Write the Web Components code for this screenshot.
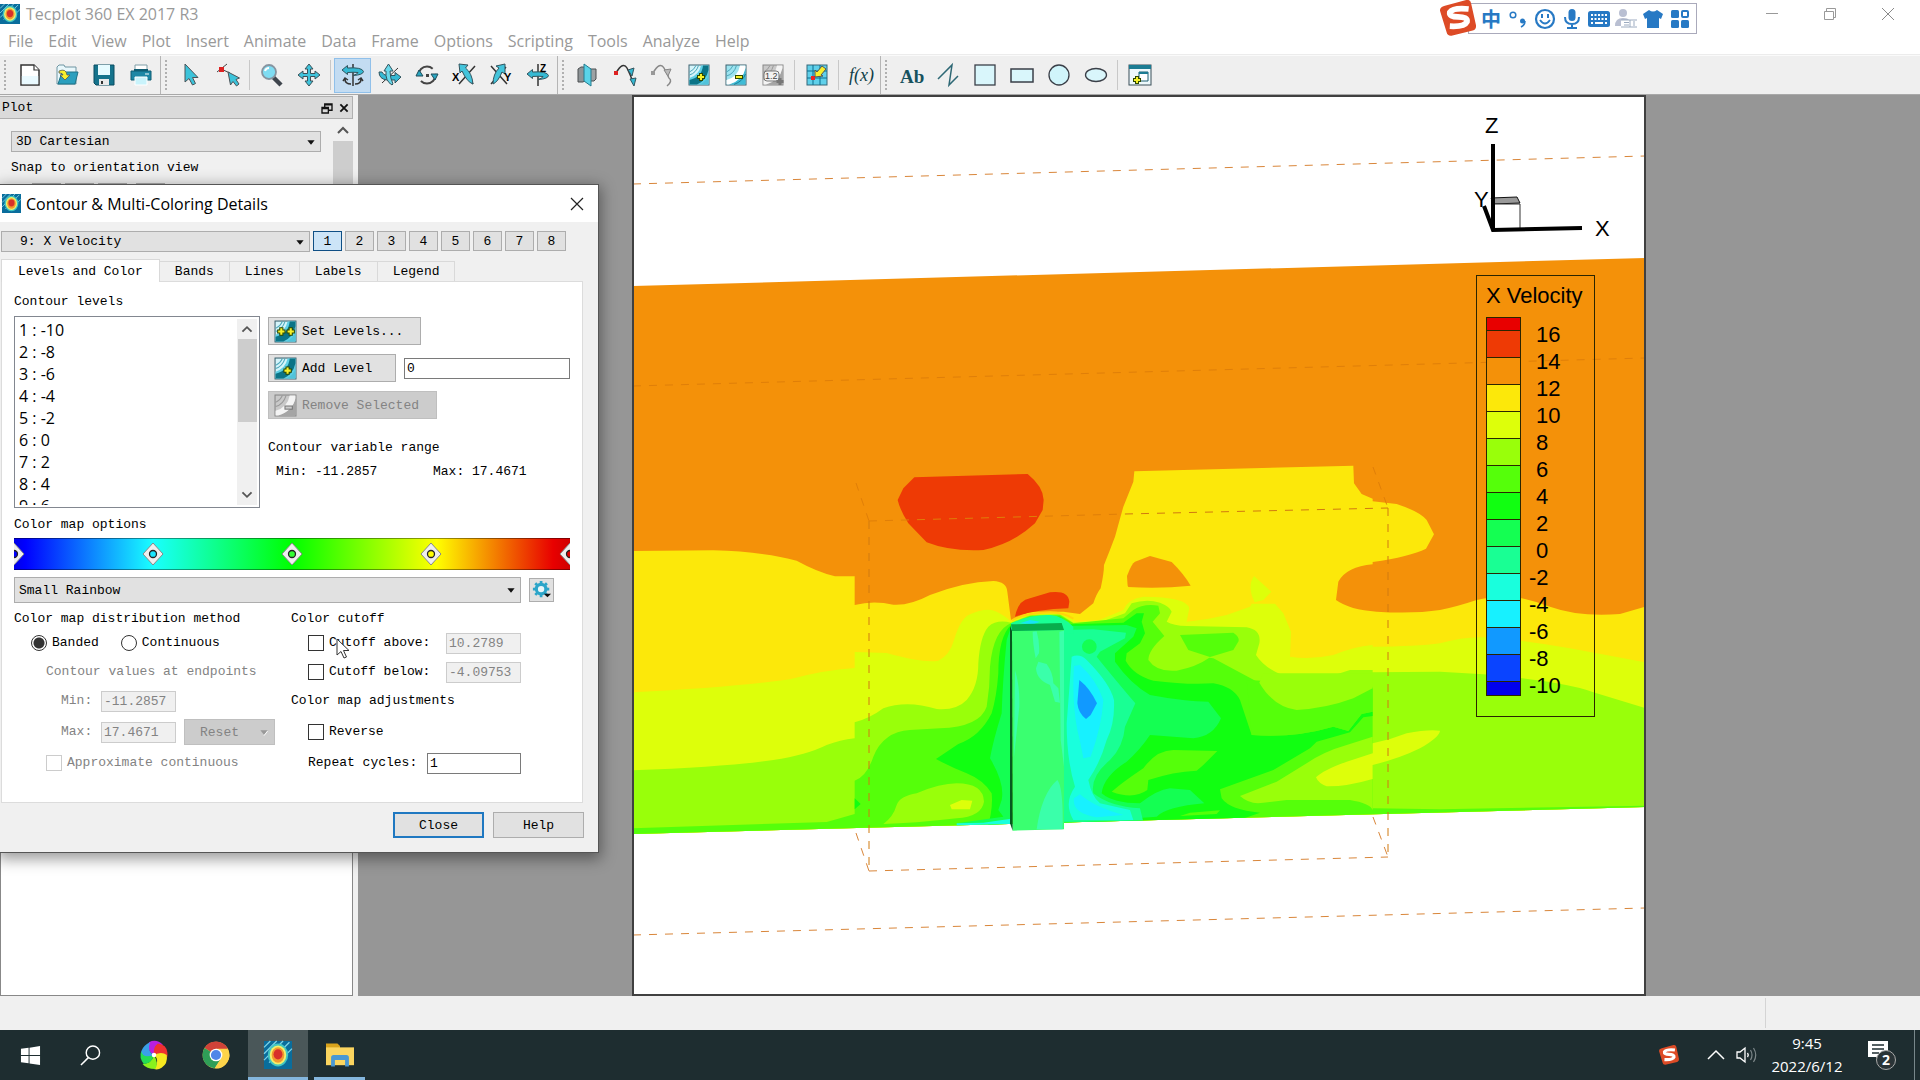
<!DOCTYPE html>
<html lang="en">
<head>
<meta charset="utf-8">
<title>Tecplot 360 EX 2017 R3</title>
<style>
  html, body { height: 100%; }
  body {
    margin: 0;
    font-family: "Open Sans", "Noto Sans CJK SC", sans-serif;
    font-size: 16px;
    overflow: hidden;
    --mono: 13px "Liberation Mono", "Noto Sans CJK SC", monospace;
  }
</style>
</head>
<body>
<tec-app></tec-app>

<script>
const contourBg = `<rect x="1" y="1" width="20" height="20" fill="#d5f4fa" stroke="#3d6370"/>
  <path d="M1.500 20.500V14Q11 11 13 1.500H20.500V20.500Z" fill="#5fd0e6"/>
  <path d="M1.500 20.500V16Q14 13 15 1.500H20.500V6Q18 17 9 20.500Z" fill="#0b7487"/>
  <path d="M12 20.500Q19 17 20.500 11V20.500Z" fill="#52c3da"/>
  <path d="M1.500 8Q6 6 8 1.500M1.500 11Q8 9 10.500 1.500" fill="none" stroke="#4ba8bb"/>`;
const minusBg = `<rect x="1" y="1" width="20" height="20" fill="#9de3ef" stroke="#3d6370"/>
  <path d="M4 20.500Q18 16 20.500 4V20.500Z" fill="#3fbcd6"/>
  <path d="M1.500 16Q13 13 15 1.500H20.500V4Q18 16 4 20.500H1.500Z" fill="#fff"/>
  <path d="M9 20.500Q18 17 20.500 10" fill="none" stroke="#1e7f96"/>
  <path d="M1.500 8Q6 6 8 1.500M1.500 12Q9 10 11.500 1.500" fill="none" stroke="#4ba8bb"/>`;
const grayBg = `<rect x="1" y="1" width="20" height="20" fill="#c9c9c9" stroke="#888"/>
  <path d="M4 20.500Q18 16 20.500 4V20.500Z" fill="#a5a5a5"/>
  <path d="M1.500 16Q13 13 15 1.500H20.500V4Q18 16 4 20.500H1.500Z" fill="#f4f4f4"/>
  <path d="M1.500 8Q6 6 8 1.500M1.500 12Q9 10 11.500 1.500" fill="none" stroke="#999"/>`;
const plus = (x, y) => `<path d="M${x} ${y - 4}v8M${x - 4} ${y}h8" stroke="#2f4a00" stroke-width="4"/><path d="M${x} ${y - 3}v6M${x - 3} ${y}h6" stroke="#f6f02a" stroke-width="2"/>`;
const sogou = `<path d="M3 3.500L16 0Q18.500-.5 19 2L22 15.500Q22.300 18 20 18.700L7 21.800Q4.500 22 4 19.500L0 6.500Q-.2 4.300 3 3.500Z" fill="#dd4b26"/>
  <path d="M17.500 5.500Q8 4.500 6 7.500Q5.500 10.300 11 10.300Q17 10.300 16.500 13.300Q15 16.500 6 16" fill="none" stroke="#fff" stroke-width="3.500"/>`;
const sweep = `<path d="M0 6L5.500 1.500V4Q20 3 21.500 7.500Q21 11 11 11.500Q16 10 16 8.500Q12 8 5.500 8.500V10.500Z" fill="#35b9d3" stroke="#32545e"/>`;

// every glyph is drawn on a 22x22 grid
const icons = {
  app: `<rect width="22" height="22" fill="#0a6d9c"/>
    <path d="M0 5L5 0M0 10L10 0M0 15L15 0M4 17L20 1M9 19L22 6" stroke="#7fd3e6" stroke-width="1"/>
    <ellipse cx="11" cy="11" rx="8" ry="9" fill="#43c7c1"/><ellipse cx="11" cy="11" rx="6.500" ry="7.500" fill="#f5ef6a"/>
    <ellipse cx="11" cy="11" rx="5" ry="6" fill="#f29a2e"/><ellipse cx="11" cy="10.500" rx="3.500" ry="4" fill="#d8302a"/>`,
  newFile: `<path d="M2 1H15L20 6V21H2Z" fill="#fff" stroke="#333" stroke-width="1.500"/><path d="M2.800 12H19.200V20.200H2.800Z" fill="#eafaff"/><path d="M15 1V6H20" fill="#fff" stroke="#333" stroke-width="1.200"/>`,
  open: `<path d="M1 20V3L3 1H8L9 3H20V20Z" fill="#e8f7fb" stroke="#6e95a2"/><path d="M2 20L6 8H22L19 20Z" fill="#2b9fbe" stroke="#1f7387"/>
    <path d="M3 7Q10 4 11 11H14L9 16L4 11H7Q7 9 3 9Z" fill="#f7ef2b" stroke="#555" stroke-width=".8"/>`,
  save: `<path d="M1 1H21V21H3L1 19Z" fill="#15738c" stroke="#0a4d60"/><path d="M5 1H17V11H5Z" fill="#e6fbff"/><path d="M6 15H16V21H6Z" fill="#e9e9e9"/><path d="M8 17h2v3H8Z" fill="#333"/>`,
  print: `<path d="M5 1H17V8H5Z" fill="#fff" stroke="#7f9da6"/><path d="M1 7H21V16H1Z" fill="#1d87a5" stroke="#0f5d73"/><path d="M4 6H18" stroke="#0f5d73" stroke-width="2"/><path d="M5 13H17V21H5Z" fill="#c9f3fb" stroke="#fff"/><path d="M15 10h4" stroke="#fff"/>`,
  select: `<path d="M5 0V18L9 14.500L12.500 21L15.500 19.500L12.500 13.500H18Z" fill="#3cc3da" stroke="#4b5459"/>`,
  adjust: `<path d="M0 8L10 0M4 5L13 9" fill="none" stroke="#444"/><rect x="2" y="3" width="5" height="5" fill="#d22"/><path d="M11 8L13.500 21L16 17.500L19.500 22L22 20L19 15.500L22.500 14Z" fill="#3cc3da" stroke="#4b5459"/>`,
  zoom: `<path d="M12 13L20 21" stroke="#3f454d" stroke-width="4.500"/><circle cx="8" cy="8" r="7" fill="#7fdcf2" stroke="#8794a0" stroke-width="1.800"/><path d="M4 7Q5 4 8 4" stroke="#fff" stroke-width="2" fill="none"/>`,
  move: `<path d="M11 0L15 5H12.500V9.500H17V7L22 11L17 15V12.500H12.500V17H15L11 22L7 17H9.500V12.500H5V15L0 11L5 7V9.500H9.500V5H7Z" fill="#3fc4dc" stroke="#3c5158"/>`,
  rotA: `<path d="M11 0V22" stroke="#333" stroke-width="1.500"/>${sweep}<path d="M9 20Q3 20 3 15M1 17l2-3 3 2M13 20Q19 20 19 15M16 16l3-2 2 3" fill="none" stroke="#333" stroke-width="1.500"/>`,
  rotB: `<path d="M3 19L19 4" stroke="#333"/><path d="M0 8Q0 15 8 16H16V19L22 13L16 8.500V11.500H8Q4 11 3 8Z" fill="#35b9d3" stroke="#32545e"/><path d="M13 21Q6 17 7 7H5L9.500 0L14 7H11Q11 14 14 20Z" fill="#69d8ea" stroke="#32545e"/>`,
  rotC: `<circle cx="11" cy="11" r="8.500" fill="none" stroke="#444" stroke-width="2" stroke-dasharray="20 6"/><path d="M0 12L3 6L7 12ZM15 10L19 16L22 10Z" fill="#2ba7c2" stroke="#1f4b58"/><path d="M10 10h3v3h-3Z" fill="#444"/>`,
  rotX: `<path d="M6 20L22 2M9 5L20 20" stroke="#333" stroke-width="1.500"/><path d="M6 0L15 1L12.500 4Q19 9 20 20Q14 18 9 7L7 9Z" fill="#43c4db" stroke="#32545e"/><text x="-1" y="17" font-family="Liberation Sans" font-size="11" font-weight="bold">X</text>`,
  rotY: `<path d="M1 20L16 3M1 2L17 20" stroke="#333" stroke-width="1.500"/><path d="M15 0L6 2L9 4Q3 10 3 20Q8 18 12 8L15 10Z" fill="#43c4db" stroke="#32545e"/><text x="14" y="17" font-family="Liberation Sans" font-size="11" font-weight="bold">Y</text>`,
  rotZ: `<path d="M11 0V22" stroke="#333" stroke-width="1.500"/><g transform="translate(0 4)">${sweep}</g><text x="13" y="8" font-family="Liberation Sans" font-size="10" font-weight="bold">Z</text>`,
  slice: `<path d="M1 5L4 3H9V16L6 18H1Z" fill="#8d9396" stroke="#4a4f51"/><path d="M12 5H19V15L17 17H12Z" fill="#9da2a4" stroke="#4a4f51"/><path d="M7 0L14 5V22L7 17Z" fill="#5ad3e8" stroke="#247b8e"/>`,
  stream: `<path d="M2 9Q9-3 13 4Q16 10 19 18" fill="none" stroke="#333" stroke-width="1.500"/><rect y="7" width="4" height="4" fill="#d22"/><path d="M14 6L20 4L18 12ZM16 15L22 14L20 22Z" fill="#35b9d3" stroke="#32545e"/>`,
  streamOff: `<path d="M2 9Q9-3 13 4Q16 10 18 14Q22 17 16 22" fill="none" stroke="#888" stroke-width="1.500"/><rect y="7" width="4" height="4" fill="#999"/><path d="M13 6L20 5L17 12Z" fill="#bbb" stroke="#888"/>`,
  contourAdd: contourBg + plus(13, 13),
  contourAdd2: contourBg + plus(7, 11) + plus(16, 11),
  contourDel: minusBg + `<path d="M10 13h8" stroke="#2f4a00" stroke-width="4"/><path d="M11 13h6" stroke="#f6f02a" stroke-width="2"/>`,
  contourDelOff: grayBg + `<path d="M10 13h8" stroke="#777" stroke-width="4"/><path d="M11 13h6" stroke="#ccc" stroke-width="2"/>`,
  contourLabel: grayBg + `<rect x="2" y="7" width="15" height="10" rx="3" fill="#f2f2f2" stroke="#777"/><text x="3" y="15" font-family="Liberation Sans" font-size="9" fill="#444">1.2</text><path d="M18 14v7M14.500 17.500h7" stroke="#777" stroke-width="3"/>`,
  probe: `<rect x="1" y="1" width="20" height="20" fill="#5fd0ea" stroke="#37687a"/><path d="M7 1V21M14 1V21M1 7H21M1 14H21" stroke="#0d6f90" fill="none"/><rect x="5" y="12" width="4" height="4" fill="#e22"/><path d="M9 13V6L11 8L16 2L20 5L15 11L17 12Z" fill="#f7f02b" stroke="#555"/>`,
  fx: `<text x="-1" y="17" font-family="Liberation Serif" font-style="italic" font-size="18" fill="#0f3e48">f(x)</text>`,
  ab: `<text x="0" y="19" font-family="Liberation Serif" font-weight="bold" font-size="19" fill="#17525e">Ab</text>`,
  line: `<path d="M1 15L15 1L12 21L21 12" fill="none" stroke="#2e6875" stroke-width="1.500"/>`,
  square: `<rect x="1" y="1" width="20" height="20" fill="#d9f6fb" stroke="#3a3f48" stroke-width="1.300"/>`,
  rect: `<rect x="0" y="5" width="22" height="13" fill="#d9f6fb" stroke="#3a3f48" stroke-width="1.500"/>`,
  circle: `<circle cx="11" cy="11" r="10" fill="#d0f5fb" stroke="#3a3f48" stroke-width="1.300"/>`,
  ellipse: `<ellipse cx="11" cy="11" rx="10.500" ry="6.500" fill="#d9f6fb" stroke="#3a3f48" stroke-width="1.300"/>`,
  frame: `<rect x="0" y="1" width="22" height="20" fill="#eef9fc" stroke="#3a4f58"/><path d="M0 1h22v4H0Z" fill="#1c7c93"/><path d="M10 8h9v9h-9Z" fill="#fff" stroke="#1c5f70"/><path d="M10 8h9v2h-9Z" fill="#1c7c93"/>` + plus(8, 16),
  gear: `<g fill="#2ca5c9"><circle cx="10" cy="10" r="7"/><g stroke="#2ca5c9" stroke-width="3"><path d="M10 1V19M1 10H19M3.600 3.600L16.400 16.400M16.400 3.600L3.600 16.400"/></g></g><circle cx="10" cy="10" r="3.500" fill="#e8f6fa"/><path d="M13 15h8l-4 4Z" fill="#111"/>`,
  sogou,
  windows: `<path d="M1 4L9 3V10.500H1ZM10 2.800L21 1V10.500H10ZM1 11.500H9V19L1 18ZM10 11.500H21V21L10 19.300Z" fill="#fff"/>`,
  search: `<circle cx="13.500" cy="8" r="7" fill="none" stroke="#fff" stroke-width="1.500"/><path d="M9 13L1 21" stroke="#fff" stroke-width="1.600"/>`,
  pinwheel: `<path d="M11 11Q5 8 7 1Q13-2 18 3Q12 4 11 11Z" fill="#b81fe0"/><path d="M11 11Q10 5 14 2Q21 3 21.500 9Q22 13 20 15Q18 8 11 11Z" fill="#f03030"/>
    <path d="M11 11Q17 8 21 11Q22 18 17 21Q14 23 11 22Q16 15 11 11Z" fill="#f6e81f"/><path d="M11 11Q15 18 12 22Q5 22 2 18Q9 18 11 11Z" fill="#8af01d"/>
    <path d="M11 11Q9 18 3 18Q-1 13 1 8Q5 13 11 11Z" fill="#24dc55"/><path d="M11 11Q2 14 1 8Q3 3 8 1Q5 8 11 11Z" fill="#3aa0e8"/><circle cx="11" cy="11" r="1.800" fill="#fff"/>`,
  chrome: `<circle cx="11" cy="11" r="10.500" fill="#fdd44a"/><path d="M11 11L2 5.500A10.500 10.500 0 0 1 20.500 6.500Z" fill="#d04238"/><path d="M11 11L2 5.500A10.500 10.500 0 0 0 10 21.500L15.500 13Z" fill="#2f9e57"/><path d="M11 6H20.200A10.500 10.500 0 0 1 10 21.500L15.500 13Z" fill="#fdd44a"/><circle cx="11" cy="11" r="5" fill="#fff"/><circle cx="11" cy="11" r="4" fill="#4f86e8"/>`,
  folder: `<path d="M0 2H9L11 4V8H0Z" fill="#d9a31c"/><path d="M0 5H22V19H0Z" fill="#fbd55f"/><path d="M4 20V13Q4 11 6 11H16Q18 11 18 13V20H15V15H7V20Z" fill="#4a98d3"/>`,
  caret: `<path d="M3 15L11 7L19 15" fill="none" stroke="#fff" stroke-width="1.500"/>`,
  speaker: `<path d="M2 8H5L10 4V18L5 14H2Z" fill="none" stroke="#fff" stroke-width="1.300"/><path d="M12.500 9Q14 11 12.500 13" fill="none" stroke="#fff" stroke-width="1.300"/><path d="M15.500 6Q18.500 11 15.500 16M18.500 4Q23 11 18.500 18" fill="none" stroke="#7d8789" stroke-width="1.200"/>`,
  note: `<path d="M1 1H21V17H15L12 20L9 17H1Z" fill="#fff"/><path d="M5 5H17M5 9H17M5 13H12" stroke="#1e2d30" stroke-width="1.300"/>`,
  punct: `<circle cx="6" cy="7" r="2.800" fill="none" stroke="#2779c4" stroke-width="1.500"/><circle cx="15.500" cy="13" r="2.500" fill="#2779c4"/><path d="M18 13Q18 17 14 19" fill="none" stroke="#2779c4" stroke-width="1.600"/>`,
  smile: `<circle cx="11" cy="11" r="9" fill="none" stroke="#2779c4" stroke-width="2.200"/><path d="M8 6v4M14 6v4" stroke="#2779c4" stroke-width="2"/><path d="M6 12Q11 19 16 12" fill="none" stroke="#2779c4" stroke-width="1.800"/>`,
  mic: `<rect x="7.500" y="1" width="7" height="12" rx="3.500" fill="#2779c4"/><path d="M4 9Q4 16 11 16Q18 16 18 9M11 16V20M6 20H16" fill="none" stroke="#2779c4" stroke-width="2"/>`,
  keyboard: `<rect x="0" y="3" width="22" height="16" rx="2.500" fill="#2779c4"/><path d="M3 7H19M3 11H19" stroke="#fff" stroke-width="2" stroke-dasharray="2 1.500"/><path d="M3 15H5M7 15H15M17 15H19" stroke="#fff" stroke-width="2"/>`,
  person: `<circle cx="8" cy="5" r="4" fill="#b9bfd2"/><path d="M0 18Q0 10 8 10Q13 10 14 12H6V18Z" fill="#b9bfd2"/><path d="M6 12H22M6 19H22M9 14.500H14M9 17H14M15 12V19M19 13V18" stroke="#9cabc0" fill="none"/>`,
  shirt: `<path d="M7 2Q11 5 15 2L21 6L19 11L17 10V20H5V10L3 11L1 6Z" fill="#2779c4"/>`,
  grid: `<rect x="2" y="2" width="8" height="8" rx="1.500" fill="#2779c4"/><rect x="13" y="3" width="6" height="6" rx="1" fill="#fff" stroke="#2779c4" stroke-width="2"/><rect x="2" y="12" width="8" height="8" rx="1.500" fill="#2779c4"/><rect x="12" y="12" width="8" height="8" rx="1.500" fill="#2779c4"/>`,
  min: `<path d="M5 10.500H17" stroke="#999"/>`,
  restore: `<path d="M5.500 8.500h9v8h-9ZM7.500 8V5.500H16.500V14.500H15" fill="none" stroke="#999"/>`,
  close: `<path d="M5 5L17 17M17 5L5 17" stroke="#8a8a8a" fill="none"/>`,
  closeDark: `<path d="M5 5L17 17M17 5L5 17" stroke="#222" stroke-width="1.200" fill="none"/>`,
  dockFloat: `<path d="M5.500 10.500h7v6h-7ZM8.500 10V6.500H16.500V13.500H13M5.500 11.500h7M8.500 7.500h8" fill="none" stroke="#111" stroke-width="1.500"/>`,
  dockClose: `<path d="M7 7L15 15M15 7L7 15" stroke="#111" stroke-width="2" fill="none"/>`,
  up: `<path d="M6 14L11 9L16 14" fill="none" stroke="#555" stroke-width="2"/>`,
  down: `<path d="M6 8L11 13L16 8" fill="none" stroke="#555" stroke-width="2"/>`,
  drop: `<path d="M7 9h8l-4 5Z" fill="#111"/>`,
  dropOff: `<path d="M7 9h8l-4 5Z" fill="#999"/><path d="M15 10l-4 5" stroke="#fff"/>`,
  cursor: `<path d="M5 1V17L9 13.500L12 20L14.500 19L11.500 12.500H17Z" fill="#fff" stroke="#333"/>`
};

class BaseElement extends HTMLElement {
  connectedCallback() {
    this.attachShadow({ mode: "open" }).innerHTML = this.render();
  }
}

class TecIcon extends BaseElement {
  render() {
    const size = this.getAttribute("size") || 22;
    return `<style>
      :host { display: inline-flex; flex: none; }
      svg { display: block; overflow: visible; }
    </style>
    <svg width="${size}" height="${size}" viewBox="0 0 22 22" aria-hidden="true">${icons[this.getAttribute("name")]}</svg>`;
  }
}
customElements.define("tec-icon", TecIcon);

class TecSelect extends BaseElement {
  render() {
    return `<style>
      :host { display: grid; align-items: center; height: 21px; }
      select {
        grid-area: 1 / 1; width: 100%; height: 100%; box-sizing: border-box; margin: 0;
        appearance: none; border: 1px solid #adadad; border-radius: 0; background: #e1e1e1;
        padding: 0 20px 0 var(--inset, 4px); font: var(--mono); color: #000;
      }
      tec-icon { grid-area: 1 / 1; justify-self: end; pointer-events: none; }
    </style>
    <select aria-label="${this.getAttribute("label")}"><option>${this.getAttribute("value")}</option></select>
    <tec-icon name="drop" size="20"></tec-icon>`;
  }
}
customElements.define("tec-select", TecSelect);

class TitleBar extends BaseElement {
  render() {
    return `<style>
      :host { display: flex; align-items: center; height: 28px; padding-right: 4px; background: #fff; color: #999; }
      h1 { font: inherit; margin: 0 auto 0 6px; }
      tec-icon:first-child { margin-left: 2px; }
      button { width: 58px; height: 28px; padding: 0; border: 0; background: none; display: grid; place-items: center; }
      button tec-icon { margin: 0; }
    </style>
    <tec-icon name="app" size="20"></tec-icon>
    <h1>Tecplot 360 EX 2017 R3</h1>
    <button aria-label="Minimize"><tec-icon name="min"></tec-icon></button>
    <button aria-label="Restore"><tec-icon name="restore"></tec-icon></button>
    <button aria-label="Close"><tec-icon name="close"></tec-icon></button>`;
  }
}
customElements.define("title-bar", TitleBar);

class MenuBar extends BaseElement {
  items = ["File", "Edit", "View", "Plot", "Insert", "Animate", "Data", "Frame", "Options", "Scripting", "Tools", "Analyze", "Help"];

  render() {
    return `<style>
      :host { display: flex; height: 26px; background: #fff; border-bottom: 1px solid #ececec; }
      button { border: 0; background: none; padding: 0 7px 0 8px; font: inherit; color: #999; }
    </style>
    ${this.items.map((i) => `<button>${i}</button>`).join("")}`;
  }
}
customElements.define("menu-bar", MenuBar);

class ToolBar extends BaseElement {
  groups = [
    ["newFile", "open", "save", "print"],
    ["select", "adjust", "|", "zoom", "move", "|", "rotA", "rotB", "rotC", "rotX", "rotY", "rotZ"],
    ["slice", "stream", "streamOff", "contourAdd", "contourDel", "contourLabel", "|", "probe", "|", "fx"],
    ["ab", "line", "square", "rect", "circle", "ellipse", "|", "frame"],
  ];

  button(name) {
    if (name === "|") return `<span class="sep"></span>`;
    return `<button class="${name === "rotA" ? "on" : ""}" aria-label="${name}"><tec-icon name="${name}"></tec-icon></button>`;
  }

  render() {
    return `<style>
      :host { display: flex; height: 38px; background: #efefef; border-top: 1px solid #fafafa; border-bottom: 1px solid #a8a8a8; }
      .group { display: flex; align-items: center; padding-right: 1px; border-right: 1px solid #b5b5b5; }
      .group:last-child { border: 0; }
      .handle { width: 2px; height: 30px; margin: 0 5px 0 4px; background: repeating-linear-gradient(#b0b0b0 0 2px, transparent 2px 4px); }
      button { width: 37px; height: 35px; padding: 0; border: 1px solid transparent; background: none; display: grid; place-items: center; }
      .on { background: #c3dcf2; border-color: #90c0ea; }
      .sep { width: 1px; height: 30px; margin: 0 3px; background: #c8c8c8; }
    </style>
    ${this.groups.map((g) => `<div class="group"><span class="handle"></span>${g.map(this.button).join("")}</div>`).join("")}`;
  }
}
customElements.define("tool-bar", ToolBar);

class PlotSidebar extends BaseElement {
  render() {
    return `<style>
      :host { display: flex; flex-direction: column; width: 353px; padding: 1px 5px 0 0; background: #f0f0f0; font: var(--mono); }
      header { display: flex; align-items: center; height: 21px; background: #dadada; border: 1px solid #b0b0b0; border-left: 0; }
      h2 { font: inherit; margin: 0 auto 0 2px; }
      header button { border: 0; padding: 0; background: none; display: flex; width: 17px; justify-content: center; }
      .scroll { display: flex; height: 420px; }
      .content { flex: 1; padding: 12px 12px 0 11px; }
      p { margin: 6px 0 5px; line-height: 20px; }
      .views { display: flex; gap: 4px; padding-left: 21px; }
      .views button { width: 29px; height: 24px; border: 1px solid #adadad; background: #e1e1e1; }
      .views button:last-child { margin-left: 5px; }
      .bar { width: 20px; display: flex; flex-direction: column; align-items: center; }
      .thumb { width: 20px; height: 200px; background: #cdcdcd; }
      .list { flex: 1; background: #fff; border: 1px solid #888; }
    </style>
    <header><h2>Plot</h2>
      <button aria-label="Float"><tec-icon name="dockFloat" size="20"></tec-icon></button>
      <button aria-label="Close"><tec-icon name="dockClose" size="20"></tec-icon></button>
    </header>
    <div class="scroll">
      <div class="content">
        <tec-select label="Plot type" value="3D Cartesian"></tec-select>
        <p>Snap to orientation view</p>
        <div class="views"><button aria-label="XY"></button><button aria-label="YZ"></button><button aria-label="XZ"></button><button aria-label="Iso"></button></div>
      </div>
      <div class="bar"><tec-icon name="up"></tec-icon><span class="thumb"></span></div>
    </div>
    <div class="list"></div>`;
  }
}
customElements.define("plot-sidebar", PlotSidebar);

class FlowPlot extends BaseElement {
  colors = ["#e80000", "#ee3a05", "#f49109", "#fce80a", "#ddff0a", "#99ff0a", "#55ff0a", "#11ff11", "#14ff52", "#19ff94", "#19ffdd", "#17f1ff", "#1199ff", "#0a44ff", "#0000ee"];

  legend() {
    const cells = this.colors.map((c, i) => {
      const y = i ? 330 + (i - 1) * 27 : 317;
      const h = i === 0 ? 13 : i === 14 ? 14 : 27;
      return `<rect x="1486" y="${y}" width="34" height="${h}" fill="${c}"/>`;
    });
    const labels = [];
    for (let v = 16, y = 342; v >= -10; v -= 2, y += 27) {
      labels.push(`<text x="${v < 0 ? 1529 : 1536}" y="${y}">${v}</text>`);
    }
    return `<g stroke="#2b2500" shape-rendering="crispEdges"><rect x="1476" y="275" width="118" height="441" fill="none"/>${cells.join("")}</g>
      <text x="1486" y="303">X Velocity</text>${labels.join("")}`;
  }

  render() {
    return `<style>
      :host { display: block; height: 100%; aspect-ratio: 1014 / 901; background: #fff; }
      svg { display: block; width: 100%; height: 100%; }
      text { font: 22px "Liberation Sans", Arial, sans-serif; }
    </style>
    <svg viewBox="632 95 1014 901" role="img" aria-label="X Velocity contour">
      <clipPath id="slab"><path d="M633 286L1645 258V807L633 834Z"/></clipPath>
      <g clip-path="url(#slab)">
      <rect x="633" y="250" width="1012" height="600" fill="#f49109"/>
      <g transform="translate(630 440) scale(.33333)">
        <path fill="#fce80a" d="M9 333L250 331Q400 335 500 362Q560 395 615 409H674V495Q730 480 790 494Q840 497 900 465Q1000 426 1090 423Q1130 425 1132 455L1143 540L1200 515L1300 515L1350 522L1390 490Q1400 460 1412 445Q1422 400 1422 375Q1440 330 1455 290L1480 200L1510 125L1513 94L2170 77L2172 130L2195 162L2228 176V184L2300 192Q2370 215 2390 240L2412 283L2388 326Q2340 350 2228 366V373Q2150 380 2125 425L2118 480Q2160 510 2240 515Q2350 522 2430 510Q2480 500 2540 480Q2600 465 2675 475Q2720 485 2760 500Q2850 532 2970 522L3045 500V1400H9Z"/>
        <path fill="#f49109" d="M1493 437L1491 408Q1505 370 1515 365L1560 348L1625 366Q1660 400 1682 437Q1590 447 1495 441Z"/>
        <path fill="#ddff0a" d="M9 757Q300 742 480 718Q580 690 674 684V636L770 639Q880 670 925 662Q960 645 972 600Q990 540 1015 525Q1070 500 1100 515Q1130 530 1143 545L1200 522L1290 520L1340 545L1410 539L1480 510Q1495 475 1540 470Q1670 470 1678 505L1670 545Q1730 540 1790 525L1860 500L1865 491H1935L1960 520L1983 575L1980 650Q2040 660 2110 645Q2170 620 2228 615V620Q2360 620 2430 610Q2500 590 2560 592Q2680 600 2820 625L3045 667V1400H9Z"/>
        <path fill="#ddff0a" d="M1872 408L1924 455L1900 480L1874 487Q1850 440 1872 408Z"/>
        <path fill="#99ff0a" d="M9 991Q300 980 430 960Q530 945 590 915Q630 900 674 895V847Q720 835 760 805Q830 780 920 807Q980 812 1010 780Q1045 740 1045 670Q1050 590 1075 560Q1100 538 1143 548L1200 525L1290 523L1330 548L1410 547L1485 520L1505 490Q1550 475 1590 488Q1620 500 1625 515L1610 545Q1630 557 1670 558L1850 562Q1895 570 1888 610L1878 645Q1910 695 1990 715Q2080 720 2160 690H2228V697L2430 695L2560 703Q2700 715 2780 730Q2850 742 2890 757L3045 804V1400H9Z"/>
        <path fill="#55ff0a" d="M9 1165L590 1146Q630 1135 674 1122V1022Q710 1010 730 950Q760 875 840 870L930 865Q1050 860 1070 800Q1080 740 1080 680Q1090 570 1143 550L1200 528L1290 526L1330 550L1480 535L1510 510Q1540 490 1585 497L1590 520L1568 545L1603 588Q1555 630 1555 660Q1580 697 1640 692Q1700 680 1738 653L1750 655L1890 730Q1930 800 2000 810Q2090 805 2170 775L2228 745V1105L2430 1108L3045 1097V1400H9Z"/>
        <path fill="#55ff0a" d="M1650 585L1810 578Q1828 590 1826 603L1810 630L1740 651L1675 630Z"/>
        <path fill="#99ff0a" d="M2228 890L2150 915Q2080 935 2030 970L1940 1025L1830 1068Q1860 1095 1900 1088L1970 1080H2160Q2220 1090 2228 1110ZM760 1152Q790 1130 800 1095Q810 1068 860 1060Q930 1030 980 1030Q1060 1030 1062 1085Q1055 1130 980 1135Q850 1150 760 1152Z"/>
        <path fill="#ddff0a" d="M2058 1012Q2080 990 2150 965L2228 940V910Q2280 900 2330 880Q2390 868 2430 872Q2430 890 2370 925Q2310 955 2228 975V1017Q2150 1040 2090 1039Q2065 1030 2058 1012ZM960 1095L995 1080L1027 1082L1020 1108H965Z"/>
        <path fill="#11ff11" d="M918 957L985 912Q1050 890 1085 820Q1100 770 1105 700Q1105 590 1143 555V1170H1070Q1090 1110 1085 1060Q1060 1020 1010 1000Q960 980 918 957ZM674 1075L692 1092L674 1108Z"/>
        <path fill="#14ff52" d="M1143 560L1130 600Q1118 720 1115 820Q1090 900 1080 955Q1125 1030 1115 1080L1105 1110L1120 1130L980 1150H1143Z"/>
        <path fill="#19ffdd" d="M980 1150L1060 1148L1143 1136V1160H980Z"/>
        <path fill="#11ff11" d="M1143 552L1200 532L1290 530L1320 553L1480 548L1520 520H1542L1535 545L1545 580L1530 610L1490 640L1487 662Q1510 705 1570 722Q1670 735 1750 730Q1810 740 1830 780L1865 885Q1990 895 2110 860L2155 873L2195 822L2228 815V828L2200 832L2160 877L2060 905L2040 925L1930 990L1770 1048L1775 1075Q1800 1110 1890 1118L1800 1150H1300Z"/>
        <path fill="#55ff0a" d="M1865 885Q1990 895 2110 860L2155 873L2195 822L2228 815V740L1850 720Z"/>
        <path fill="#99ff0a" d="M1888 728Q1930 800 2000 810Q2090 805 2170 775L2228 745V700H1900Z"/>
        <path fill="#55ff0a" d="M1445 1055Q1480 1025 1540 985Q1580 930 1630 930L1762 933L1720 975L1700 992Q1630 995 1555 1020L1552 1050Q1510 1080 1445 1055ZM1650 1128L1680 1118L1770 1111L1760 1122Z"/>
        <path fill="#14ff52" d="M1300 558L1490 555L1520 565L1510 590L1455 640V665Q1500 730 1560 765Q1670 785 1735 785L1773 835Q1750 890 1690 895L1560 885Q1530 930 1490 965Q1420 1010 1415 1060Q1450 1090 1530 1090Q1580 1050 1620 1045L1680 1050L1723 1090Q1610 1100 1580 1130L1300 1150Z"/>
        <path fill="#19ff94" d="M1300 570L1390 568L1488 578L1485 595L1410 635L1400 650Q1440 700 1516 790L1485 860Q1480 920 1440 960Q1380 1010 1390 1060Q1440 1100 1530 1105L1540 1145H1300Z"/>
        <circle cx="1378" cy="620" r="22" fill="#14ff52"/>
        <path fill="#19ffdd" d="M1325 650Q1350 640 1370 660Q1440 730 1452 780Q1455 850 1430 900Q1410 970 1375 1020Q1385 1070 1410 1090L1500 1110L1510 1140H1330Q1300 1090 1335 1040Q1310 960 1310 850Q1320 720 1325 650Z"/>
        <path fill="#17f1ff" d="M1332 678L1350 675Q1400 720 1420 780Q1415 860 1382 950L1360 955Q1350 900 1342 870Q1325 780 1332 678ZM1350 1063Q1390 1100 1480 1125L1400 1132Q1325 1120 1332 1075Z"/>
        <path fill="#1199ff" d="M1348 720Q1380 745 1401 790L1382 825L1368 837Q1345 820 1342 790Z"/>
        <path fill="#ee3a05" d="M803 180L820 145L853 112L1193 102Q1240 140 1241 180L1238 210L1215 250Q1150 310 1060 330Q960 335 890 307L835 250Q810 210 803 180ZM1155 530Q1165 480 1200 475L1260 457Q1315 450 1318 485L1315 505Q1220 508 1155 530Z"/>
        <path fill="none" stroke="#ffd50a" stroke-width="6" d="M1146 541Q1180 520 1260 517Q1300 518 1330 536"/>
        <path fill="#19ff94" d="M1143 550Q1200 523 1260 525Q1300 528 1330 560V580H1143Z"/>
        <path fill="#17e4f5" d="M1170 550L1200 540L1230 545L1210 553Z"/>
      </g>
      </g>
      <g transform="translate(1000 440) scale(.33333)">
        <path fill="#3aff70" d="M36 573L192 570V1168L38 1172Z"/>
        <path fill="#08ad4c" d="M33 553L185 549L192 570L36 573Z"/>
        <path fill="#05591f" d="M30 558L36 573L38 1172L30 1150Z"/>
        <path fill="#3affaa" d="M98 575L110 574Q120 610 117 640L107 655Q98 610 98 575ZM115 665L140 672Q160 700 160 730L175 745L180 788L165 785L150 735Q110 720 108 685ZM178 575L192 572V980L182 900ZM45 690Q60 740 58 800L42 950ZM110 1168Q125 1060 172 1020Q190 1040 188 1168Z"/>
      </g>
      <g fill="none" stroke="#d9863a" stroke-dasharray="8 8">
        <path d="M633 184L1645 156M633 935L1645 908M869 871L1388 857M856 833L869 871M1373 817L1388 857"/>
        <path stroke="#d17a10" d="M869 521V871M1388 508V857M1125 514L1388 508"/>
        <path stroke="#e07f08" d="M633 386L1645 358M869 521L1125 514M856 483L869 521M1373 467L1388 508"/>
      </g>
      <path d="M1491 198L1517 197L1520 203L1494 204Z" fill="#999" stroke="#111"/>
      <path d="M1494 204H1520V229H1494Z" fill="#fff" stroke="#333"/>
      <path d="M1484 206L1493 230L1582 228M1493 144V230" fill="none" stroke="#000" stroke-width="4"/>
      <text x="1485" y="133">Z</text><text x="1474" y="207">Y</text><text x="1595" y="236">X</text>
      ${this.legend()}
      <rect x="633" y="96" width="1012" height="899" fill="none" stroke="#404040" stroke-width="2"/>
    </svg>`;
  }
}
customElements.define("flow-plot", FlowPlot);

class LevelList extends BaseElement {
  render() {
    const items = [-10, -8, -6, -4, -2, 0, 2, 4, 6].map((v, i) => `<li>${i + 1} : ${v}</li>`).join("");
    return `<style>
      :host { display: flex; box-sizing: border-box; height: 192px; border: 1px solid #828790; background: #fff; padding: 2px; }
      ul { flex: 1; margin: 0; padding: 0 2px; list-style: none; overflow: hidden; font: 16px/22px "Open Sans", sans-serif; }
      .bar { width: 20px; display: flex; flex-direction: column; align-items: center; background: #f0f0f0; }
      .thumb { width: 19px; height: 83px; background: #cdcdcd; }
      .bar tec-icon:last-child { margin-top: auto; }
    </style>
    <ul>${items}</ul>
    <div class="bar"><tec-icon name="up" size="20"></tec-icon><span class="thumb"></span><tec-icon name="down" size="20"></tec-icon></div>`;
  }
}
customElements.define("level-list", LevelList);

class ColorMap extends BaseElement {
  render() {
    const stops = ["#00f", "#19e6ff", "#3f3", "#ff0", "#d00"];
    const marks = stops.map((c, i) => `<g transform="translate(${i * 139} 16)"><path d="M-10 0L0-11L10 0L0 11Z" fill="#eee" stroke="#888"/><circle r="3.500" fill="${c}" stroke="#222" stroke-width="1.300"/></g>`);
    return `<style>
      :host { display: block; background: linear-gradient(90deg, #0000e8, #00f 2%, #19ffff 25%, #0f0 50%, #ff0 76%, #e80000 97%, #d00000); box-shadow: inset 0 1px #0006, inset 0 -1px #0006; }
      svg { display: block; width: 100%; height: 32px; }
    </style>
    <svg viewBox="0 0 556 32" aria-hidden="true">${marks.join("")}</svg>`;
  }
}
customElements.define("color-map", ColorMap);

class ContourDialog extends BaseElement {
  render() {
    const pages = [1, 2, 3, 4, 5, 6, 7, 8].map((n) => `<button class="${n === 1 ? "on" : ""}">${n}</button>`).join("");
    return `<style>
      :host { display: block; font: var(--mono); background: #f0f0f0; border: 1px solid #555; border-left: 0; box-shadow: 0 4px 14px 2px #0006; }
      * { box-sizing: border-box; }
      header { display: flex; align-items: center; height: 37px; padding: 0 10px 0 2px; background: #fff; font: 16px "Open Sans", sans-serif; }
      h2 { font: inherit; margin: 0 auto 0 5px; }
      header button { border: 0; background: none; padding: 0; display: flex; }
      button, input { font: inherit; color: inherit; margin: 0; border-radius: 0; }
      button:not(header button) { border: 1px solid #adadad; background: #e1e1e1; padding: 0; }
      label, p { line-height: 20px; margin: 0; white-space: nowrap; }
      .pages { display: flex; gap: 3px; padding: 9px 0 7px 1px; }
      .pages tec-select { width: 309px; --inset: 18px; }
      .pages button { width: 29px; height: 20px; }
      .pages .on:not(header button) { background: #cce4f7; border-color: #0f4f85; }
      .tabs { display: flex; align-items: flex-end; padding-left: 1px; height: 22px; }
      .tabs button:not(header button) { height: 20px; border: 1px solid #d9d9d9; border-width: 1px 1px 0 0; background: #f0f0f0; padding: 0 15px; }
      .tabs .on:not(header button) { height: 23px; margin-bottom: -1px; background: #fff; border-left-width: 1px; padding: 0 16px; }
      .panel { margin: 0 15px 0 1px; border: 1px solid #dcdcdc; background: #fff; padding: 10px 12px 28px; }
      .levels { display: grid; grid-template-columns: 246px 1fr; gap: 4px 8px; margin-bottom: 7px; }
      .levels > p { grid-column: span 2; }
      button:disabled:disabled:disabled { background: #ccc; border-color: #bfbfbf; color: #838383; }
      input:not([type]) { width: 75px; height: 21px; border: 1px solid #7a7a7a; background: #fff; padding: 0 2px; }
      input:disabled:not([type]) { border-color: #ccc; background: #f0f0f0; color: #838383; }
      .actions { display: flex; flex-wrap: wrap; align-content: flex-start; align-items: center; gap: 9px 8px; padding-top: 1px; }
      .actions button:not(header button) { display: flex; align-items: center; gap: 5px; height: 28px; padding-left: 5px; }
      .set { width: 153px; margin-right: 80px; }
      .add { width: 128px; }
      .remove { width: 169px; }
      .actions input:not([type]) { width: 166px; }
      .range { display: grid; grid-template-columns: 157px auto; gap: 4px 0; padding-top: 10px; }
      .range p:first-child { grid-column: span 2; }
      .range p:not(:first-child) { padding-left: 8px; }
      color-map { margin: 3px 0 7px; }
      .map { display: flex; align-items: center; gap: 8px; margin-bottom: 6px; }
      .map tec-select { width: 507px; height: 26px; }
      .gear:not(header button) { width: 25px; height: 24px; display: grid; place-items: center; }
      .options { display: grid; grid-template-columns: 277px 230px; grid-template-rows: 16px 22px 22px 22px 26px 22px; row-gap: 7px; }
      .options p { align-self: center; }
      .options p.head { align-self: start; }
      .row { display: flex; align-items: center; }
      .pad-s { padding-left: 17px; }
      .pad-m { padding-left: 32px; }
      .pad-l { padding-left: 47px; }
      .row input:not([type]) { flex: none; }
      .row label + input:not([type]) { margin-left: auto; }
      .row label + input[type] { margin-left: 22px; }
      .dim { color: #838383; }
      .pad-l label { width: 40px; }
      .row.dim label + input:not([type]) { margin-left: 0; }
      input[type=checkbox], input[type=radio] { appearance: none; flex: none; width: 16px; height: 16px; border: 1px solid #333; background: #fff; margin-right: 5px; }
      input[type=radio] { border-radius: 50%; }
      input[type=radio]:checked { background: radial-gradient(#333 5px, #fff 6px); }
      input[type=checkbox]:disabled { border-color: #ccc; }
      .reset:not(header button) { width: 91px; height: 26px; margin-left: 8px; display: flex; align-items: center; justify-content: space-between; }
      .reset::before { content: ""; width: 0; }
      .repeat input:not([type]) { width: 94px; }
      footer { display: flex; justify-content: flex-end; gap: 9px; padding: 9px 14px 14px 0; }
      footer button { width: 91px; height: 26px; }
      footer .default:not(header button) { border: 2px solid #1f78c1; }
    </style>
    <header><tec-icon name="app" size="19"></tec-icon><h2>Contour &amp; Multi-Coloring Details</h2>
      <button aria-label="Close"><tec-icon name="closeDark"></tec-icon></button></header>
    <div class="pages"><tec-select label="Contour variable" value="9: X Velocity"></tec-select>${pages}</div>
    <div class="tabs"><button class="on">Levels and Color</button><button>Bands</button><button>Lines</button><button>Labels</button><button>Legend</button></div>
    <div class="panel">
      <div class="levels">
        <p>Contour levels</p>
        <level-list></level-list>
        <div class="actions">
          <button class="set"><tec-icon name="contourAdd2" size="23"></tec-icon>Set Levels...</button>
          <button class="add"><tec-icon name="contourAdd" size="23"></tec-icon>Add Level</button>
          <input aria-label="New level" value="0">
          <button class="remove" disabled><tec-icon name="contourDelOff" size="23"></tec-icon>Remove Selected</button>
          <div class="range"><p>Contour variable range</p><p>Min: -11.2857</p><p>Max: 17.4671</p></div>
        </div>
      </div>
      <p>Color map options</p>
      <color-map></color-map>
      <div class="map"><tec-select label="Color map" value="Small Rainbow"></tec-select>
        <button class="gear" aria-label="Color map settings"><tec-icon name="gear" size="20"></tec-icon></button></div>
      <div class="options">
        <p class="head">Color map distribution method</p><p class="head">Color cutoff</p>
        <div class="row pad-s">
          <input type="radio" name="method" id="banded" checked><label for="banded">Banded</label>
          <input type="radio" name="method" id="continuous"><label for="continuous">Continuous</label>
        </div>
        <div class="row pad-s">
          <input type="checkbox" id="above"><label for="above">Cutoff above:</label><input aria-label="Cutoff above value" value="10.2789" disabled>
        </div>
        <p class="dim pad-m">Contour values at endpoints</p>
        <div class="row pad-s">
          <input type="checkbox" id="below"><label for="below">Cutoff below:</label><input aria-label="Cutoff below value" value="-4.09753" disabled>
        </div>
        <div class="row dim pad-l"><label for="min">Min:</label><input id="min" value="-11.2857" disabled></div>
        <p>Color map adjustments</p>
        <div class="row dim pad-l"><label for="max">Max:</label><input id="max" value="17.4671" disabled>
          <button class="reset" disabled>Reset<tec-icon name="dropOff" size="20"></tec-icon></button></div>
        <div class="row pad-s"><input type="checkbox" id="reverse"><label for="reverse">Reverse</label></div>
        <div class="row dim pad-m"><input type="checkbox" id="approx" disabled><label for="approx">Approximate continuous</label></div>
        <div class="row repeat pad-s"><label for="cycles">Repeat cycles:</label><input id="cycles" value="1"></div>
      </div>
    </div>
    <footer><button class="default">Close</button><button>Help</button></footer>`;
  }
}
customElements.define("contour-dialog", ContourDialog);

class ImeBar extends BaseElement {
  items = ["punct", "smile", "mic", "keyboard", "person", "shirt", "grid"];

  render() {
    return `<style>
      :host { display: flex; align-items: flex-start; }
      .strip { display: flex; align-items: center; gap: 5px; height: 29px; margin: 3px 0 0 -8px; padding: 0 5px 0 11px; border: 1px solid #aab; background: #fff; }
      .lang { width: 22px; text-align: center; font: bold 20px/22px "Noto Sans CJK SC", sans-serif; color: #2779c4; }
      .logo { z-index: 1; }
    </style>
    <tec-icon class="logo" name="sogou" size="36"></tec-icon>
    <div class="strip"><span class="lang">中</span>${this.items.map((i) => `<tec-icon name="${i}"></tec-icon>`).join("")}</div>`;
  }
}
customElements.define("ime-bar", ImeBar);

class TaskBar extends BaseElement {
  apps = ["windows", "search", "pinwheel", "chrome", "app", "folder"];

  render() {
    return `<style>
      :host { display: flex; align-items: stretch; height: 50px; background: #1e2d30; color: #fff; font-size: 15px; }
      button { border: 0; padding: 0; background: none; width: 60px; margin-right: 2px; display: grid; place-items: center; box-sizing: border-box; }
      .windows { margin-right: 0; }
      .search { margin-right: 4px; }
      .app { background: #4a5759; }
      .app, .folder { border-bottom: 3px solid #84b6dd; padding-top: 3px; }
      .folder { width: 51px; margin-left: 4px; }
      .tray { display: flex; align-items: center; margin-left: auto; gap: 8px; }
      .tray > tec-icon:first-child { margin-right: 18px; }
      .clock { width: 84px; text-align: center; line-height: 23px; }
      .note { display: grid; margin: 0 10px; }
      .note tec-icon, .note b { grid-area: 1 / 1; }
      .note b { width: 18px; height: 18px; margin: 10px 0 0 9px; border: 1px solid #aaa; border-radius: 50%; background: #2a3437; font: bold 14px/18px "Open Sans", sans-serif; text-align: center; }
      .desk { width: 5px; border-left: 1px solid #78878a; align-self: stretch; }
    </style>
    ${this.apps.map((a) => `<button class="${a}" aria-label="${a}"><tec-icon name="${a}" size="${a === "windows" || a === "search" ? 21 : 28}"></tec-icon></button>`).join("")}
    <div class="tray">
      <tec-icon name="sogou" size="20"></tec-icon><tec-icon name="caret"></tec-icon><tec-icon name="speaker"></tec-icon>
      <div class="clock">9:45<br>2022/6/12</div>
      <div class="note"><tec-icon name="note"></tec-icon><b>2</b></div>
      <span class="desk"></span>
    </div>`;
  }
}
customElements.define("task-bar", TaskBar);

class TecApp extends BaseElement {
  render() {
    return `<style>
      :host { display: flex; flex-direction: column; height: 100vh; position: relative; }
      main { flex: 1; min-height: 0; display: flex; }
      .workspace { flex: 1; min-width: 0; display: flex; justify-content: center; background: #969696; }
      .status { display: flex; justify-content: flex-end; height: 34px; background: #f0f0f0; }
      .status span { width: 154px; margin: 2px 0; border-left: 1px solid #d4d4d4; }
      contour-dialog { position: absolute; left: 0; top: 184px; width: 598px; }
      ime-bar { position: absolute; right: 223px; top: 0; }
      .cursor { position: absolute; left: 332px; top: 638px; }
    </style>
    <title-bar></title-bar>
    <menu-bar></menu-bar>
    <tool-bar></tool-bar>
    <main>
      <plot-sidebar></plot-sidebar>
      <div class="workspace"><flow-plot></flow-plot></div>
    </main>
    <div class="status"><span></span></div>
    <task-bar></task-bar>
    <contour-dialog></contour-dialog>
    <ime-bar></ime-bar>
    <tec-icon class="cursor" name="cursor"></tec-icon>`;
  }
}
customElements.define("tec-app", TecApp);
</script>
</body>
</html>
